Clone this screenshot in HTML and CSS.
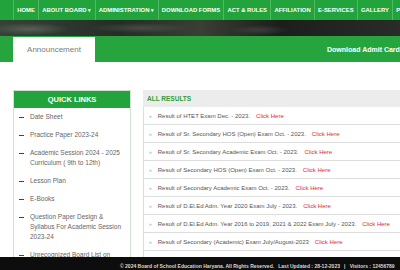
FILE: index.html
```html
<!DOCTYPE html>
<html lang="en">
<head>
    <meta charset="UTF-8">
    <meta name="viewport" content="width=device-width, initial-scale=1.0">
    <title>Board of School Education</title>
    <link rel="stylesheet" href="styles.css">
</head>
<body>
    <div class="page">
        <nav class="topnav">
            <a href="#">HOME</a>
            <a href="#">ABOUT BOARD <span class="caret">&#9662;</span></a>
            <a href="#">ADMINISTRATION <span class="caret">&#9662;</span></a>
            <a href="#">DOWNLOAD FORMS</a>
            <a href="#">ACT &amp; RULES</a>
            <a href="#">AFFILIATION</a>
            <a href="#">E-SERVICES</a>
            <a href="#">GALLERY</a>
            <a href="#">PUBLICATIONS</a>
        </nav>
        <div class="banner"></div>
        <div class="announce">
            <div class="announce-tab">Announcement</div>
            <div class="ticker"><span>Download Admit Card Sr. Secondary &amp; Secondary Exam March - 2024</span></div>
        </div>

        <main class="main">
            <aside class="quick">
                <h2 class="quick-title">QUICK LINKS</h2>
                <ul class="quick-list">
                    <li><a href="#">Date Sheet</a></li>
                    <li><a href="#">Practice Paper 2023-24</a></li>
                    <li><a href="#">Academic Session 2024 - 2025 Curriculum ( 9th to 12th)</a></li>
                    <li><a href="#">Lesson Plan</a></li>
                    <li><a href="#">E-Books</a></li>
                    <li><a href="#">Question Paper Design &amp; Syllabus For Academic Session 2023-24</a></li>
                    <li><a href="#">Unrecognized Board List on UGC Website</a></li>
                </ul>
            </aside>

            <section class="results">
                <h2 class="results-title">ALL RESULTS</h2>
                <ul class="results-list">
                    <li>Result of HTET Exam Dec. - 2023. <a href="#">Click Here</a></li>
                    <li>Result of Sr. Secondary HOS (Open) Exam Oct. - 2023. <a href="#">Click Here</a></li>
                    <li>Result of Sr. Secondary Academic Exam Oct. - 2023. <a href="#">Click Here</a></li>
                    <li>Result of Secondary HOS (Open) Exam Oct. - 2023. <a href="#">Click Here</a></li>
                    <li>Result of Secondary Academic Exam Oct. - 2023. <a href="#">Click Here</a></li>
                    <li>Result of D.El.Ed Adm. Year 2020 Exam July - 2023. <a href="#">Click Here</a></li>
                    <li>Result of D.El.Ed Adm. Year 2016 to 2019, 2021 &amp; 2022 Exam July - 2023. <a href="#">Click Here</a></li>
                    <li>Result of Secondary (Academic) Exam July/August-2023 <a href="#">Click Here</a></li>
                    <li>Result of Sr. Secondary (Academic) Exam July/August-2023 <a href="#">Click Here</a></li>
                </ul>
            </section>
        </main>

        <footer class="footer">
            © 2024 Board of School Education Haryana. All Rights Reserved. &nbsp; Last Updated : 28-12-2023 &nbsp; | &nbsp; Visitors : 12456789
        </footer>
    </div>
</body>
</html>
```

FILE: styles.css
```css
* {
    box-sizing: border-box;
}
body {
    margin: 0;
    font-family: "Liberation Sans", Arial, sans-serif;
    background: #fff;
}
a {
    text-decoration: none;
}
ul {
    list-style: none;
    margin: 0;
    padding: 0;
}
h2 {
    margin: 0;
}
.page {
    height: 270px;
    display: flex;
    flex-direction: column;
    overflow: hidden;
}

/* top menu */
.topnav {
    height: 20px;
    flex: none;
    display: flex;
    align-items: stretch;
    padding-left: 13px;
    background: #22a33c;
    white-space: nowrap;
    overflow: hidden;
}
.topnav a {
    display: flex;
    align-items: center;
    padding: 0 3.2px;
    border-left: 1px solid rgba(255,255,255,0.22);
    color: #fff;
    font-size: 5.9px;
    font-weight: bold;
}
.topnav .caret {
    font-size: 5px;
    margin-left: 2px;
}

.banner {
    height: 16px;
    flex: none;
    background:
        radial-gradient(ellipse 40px 6px at 30px 9px, rgba(120,125,110,0.55), transparent),
        radial-gradient(ellipse 50px 5px at 140px 8px, rgba(110,115,100,0.4), transparent),
        radial-gradient(ellipse 30px 5px at 260px 10px, rgba(90,90,85,0.45), transparent),
        linear-gradient(90deg, #364238 0%, #262d27 30%, #3a3f33 50%, #1b1e1b 70%, #2a2c28 100%);
}

/* announcement band */
.announce {
    height: 26px;
    flex: none;
    display: flex;
    background: #26a53f;
}
.announce-tab {
    width: 82px;
    margin: 1px 0 0 13px;
    background: #fff;
    color: #7a7a7a;
    font-size: 8px;
    display: flex;
    align-items: center;
    justify-content: center;
}
.ticker {
    flex: 1;
    overflow: hidden;
    white-space: nowrap;
    padding-left: 232px;
    display: flex;
    align-items: center;
    color: #fff;
    font-size: 7px;
    font-weight: bold;
}

/* content */
.main {
    flex: 1;
    display: flex;
    align-items: flex-start;
    gap: 12px;
    padding: 28px 0 0 13px;
    overflow: hidden;
}
.quick {
    width: 118px;
    flex: none;
    border: 1px solid #cfe2d1;
}
.quick-title {
    height: 17px;
    background: #22a33c;
    color: #fff;
    font-size: 7.5px;
    font-weight: bold;
    display: flex;
    align-items: center;
    justify-content: center;
}
.quick-list li {
    display: flex;
    padding: 4px 4px 4px 5px;
    line-height: 10px;
}
.quick-list li::before {
    content: "";
    flex: none;
    width: 5px;
    height: 1.5px;
    margin: 4.5px 6px 0 0;
    background: #444;
}
.quick-list a {
    color: #666;
    font-size: 6.5px;
}

.results {
    width: 330px;
    flex: none;
}
.results-title {
    height: 17px;
    padding-left: 4px;
    background: #ececec;
    color: #2b9e3c;
    font-size: 6.5px;
    font-weight: bold;
    display: flex;
    align-items: center;
}
.results-list li {
    height: 18px;
    display: flex;
    align-items: center;
    gap: 3px;
    padding-left: 5px;
    border-left: 1px solid #ddd;
    border-bottom: 1px solid #ddd;
    color: #555;
    font-size: 6px;
    white-space: nowrap;
}
.results-list li::before {
    content: "\00bb";
    color: #aaa;
    font-size: 5px;
    margin-right: 3px;
}
.results-list a {
    color: #dd2a33;
    margin-left: 3px;
}

.footer {
    height: 13px;
    flex: none;
    background: #0d0d0d;
    color: #d8d8d8;
    font-size: 5px;
    font-weight: bold;
    padding: 6px 0 0 120px;
    white-space: nowrap;
    overflow: hidden;
}
```
